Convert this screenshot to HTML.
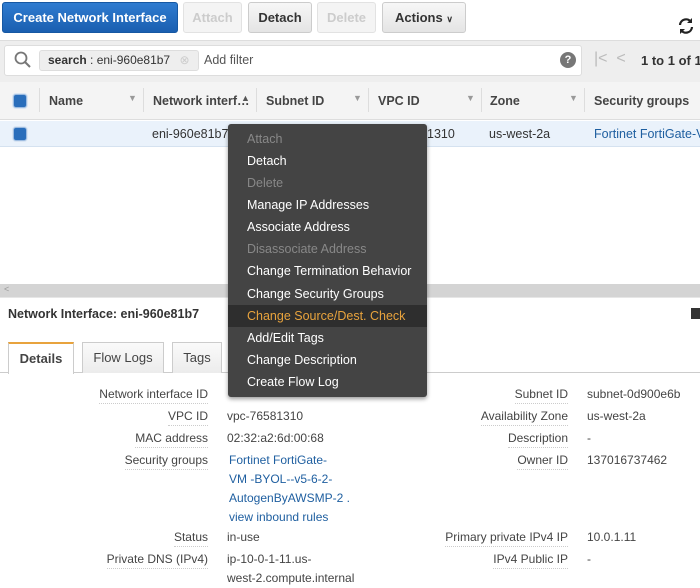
<!DOCTYPE html>
<html><head><meta charset="utf-8">
<style>
*{box-sizing:border-box;margin:0;padding:0}
body{width:700px;height:581px;overflow:hidden;background:#fff;font-family:"Liberation Sans",Arial,sans-serif;font-size:12px;color:#333;position:relative}
.a{position:absolute;white-space:nowrap}
.btn{position:absolute;top:2px;height:31px;border:1px solid #ccc;border-radius:3px;background:linear-gradient(#f7f7f7,#e4e4e4);font-weight:bold;font-size:13px;line-height:29px;text-align:center;color:#333}
.dis{color:#ccc;background:#f4f4f4;border-color:#e2e2e2}
.cb{position:absolute;width:14px;height:14px;border-radius:3px;background:#2a6ebb;border:1px solid #9cbbe0;box-shadow:0 0 0 1px #d9e5f3}
.hd{position:absolute;top:94px;font-weight:bold;font-size:12.5px;color:#444}
.car{position:absolute;top:93px;color:#999;font-size:9px}
.sep{position:absolute;top:88px;width:1px;height:24px;background:#ddd}
.menu{position:absolute;left:228px;top:124px;width:199px;height:273px;background:#444;border-radius:3px;box-shadow:0 2px 4px rgba(0,0,0,.4)}
.mi{position:absolute;left:19px;color:#fff;font-size:12.5px;white-space:nowrap}
.mg{color:#888}
.lb{position:absolute;text-align:right;font-size:12px;color:#444;white-space:nowrap;border-bottom:1px dotted #ccc;padding-bottom:2px}
.v{position:absolute;font-size:12px;color:#444;white-space:nowrap}
.lk{color:#1f5fa0}
.tab{position:absolute;top:342px;height:31px;border:1px solid #ccc;border-bottom:none;background:linear-gradient(#fafafa,#ececec);font-size:13px;line-height:29px;text-align:center;color:#444}
</style></head><body>
<div class="btn" style="left:2px;width:176px;background:linear-gradient(#2f7cd0,#1a5fb0);border-color:#1658a3;color:#fff">Create Network Interface</div>
<div class="btn dis" style="left:183px;width:59px">Attach</div>
<div class="btn" style="left:248px;width:64px">Detach</div>
<div class="btn dis" style="left:317px;width:59px">Delete</div>
<div class="btn" style="left:382px;width:84px">Actions <span style="font-size:9px">&#8744;</span></div>
<svg class="a" style="left:677px;top:17px" width="18" height="18" viewBox="0 0 18 18"><path d="M3 8a6 6 0 0 1 11-3M15 10a6 6 0 0 1-11 3" stroke="#222" stroke-width="2.2" fill="none"/><path d="M15 1v5h-5z M3 17v-5h5z" fill="#222"/></svg>

<div class="a" style="left:0;top:40px;width:700px;height:42px;background:#eee;border-top:1px solid #ddd"></div>
<div class="a" style="left:4px;top:45px;width:578px;height:31px;background:#fff;border:1px solid #ddd;border-radius:3px"></div>
<svg class="a" style="left:14px;top:51px" width="18" height="18" viewBox="0 0 18 18"><circle cx="7" cy="7" r="5.5" stroke="#777" stroke-width="1.8" fill="none"/><path d="M11 11l5 5" stroke="#777" stroke-width="2"/></svg>
<div class="a" style="left:39px;top:50px;width:160px;height:21px;background:#eee;border:1px solid #ddd;border-radius:3px;line-height:19px;padding-left:8px;font-size:12px;color:#333"><b>search</b> : eni-960e81b7 <span style="color:#ccc;margin-left:6px">&#8855;</span></div>
<div class="a" style="left:204px;top:53px;color:#555;font-size:12.5px">Add filter</div>
<div class="a" style="left:560px;top:52px;width:16px;height:16px;border-radius:8px;background:#777;color:#fff;font-weight:bold;font-size:11px;text-align:center;line-height:16px">?</div>
<div class="a" style="left:594px;top:50px;color:#bbb;font-size:16px">|&lt;&nbsp;&nbsp;&lt;</div>
<div class="a" style="left:641px;top:53px;font-weight:bold;font-size:13px;color:#333">1 to 1 of 1</div>

<div class="a" style="left:0;top:82px;width:700px;height:38px;background:#f4f4f4;border-bottom:1px solid #ddd"></div>
<div class="cb" style="left:13px;top:94px"></div>
<div class="sep" style="left:39px"></div>
<div class="hd" style="left:49px">Name</div><div class="car" style="left:128px">&#9660;</div>
<div class="sep" style="left:143px"></div>
<div class="hd" style="left:153px">Network interf&#8230;</div><div class="car" style="left:241px;color:#555">&#9650;</div>
<div class="sep" style="left:256px"></div>
<div class="hd" style="left:266px">Subnet ID</div><div class="car" style="left:353px">&#9660;</div>
<div class="sep" style="left:368px"></div>
<div class="hd" style="left:378px">VPC ID</div><div class="car" style="left:466px">&#9660;</div>
<div class="sep" style="left:481px"></div>
<div class="hd" style="left:490px">Zone</div><div class="car" style="left:569px">&#9660;</div>
<div class="sep" style="left:584px"></div>
<div class="hd" style="left:594px">Security groups</div>

<div class="a" style="left:0;top:121px;width:700px;height:26px;background:#eaf2fb;border-bottom:1px solid #d5e2f0"></div>
<div class="cb" style="left:13px;top:127px"></div>
<div class="a" style="left:152px;top:127px;font-size:12.5px">eni-960e81b7</div>
<div class="a" style="left:427px;top:127px;font-size:12.5px">1310</div>
<div class="a" style="left:489px;top:127px;font-size:12.5px">us-west-2a</div>
<div class="a" style="left:594px;top:127px;font-size:12.5px;color:#1f5fa0">Fortinet FortiGate-V</div>

<div class="a" style="left:0;top:284px;width:700px;height:13px;background:#d4d4d4"></div>
<div class="a" style="left:4px;top:284px;color:#999;font-size:9px">&lt;</div>
<div class="a" style="left:0;top:297px;width:700px;height:1px;background:#e6e6e6"></div>
<div class="a" style="left:8px;top:307px;font-weight:bold;font-size:12.5px;color:#333">Network Interface: eni-960e81b7</div>
<div class="a" style="left:691px;top:308px;width:9px;height:11px;background:#333"></div>

<div class="a" style="left:0;top:372px;width:700px;height:1px;background:#ccc"></div>
<div class="tab" style="left:8px;width:66px;background:#fff;border-top:2px solid #e8a33d;font-weight:bold;height:32px">Details</div>
<div class="tab" style="left:82px;width:82px">Flow Logs</div>
<div class="tab" style="left:172px;width:50px">Tags</div>

<div class="lb" style="right:492px;top:387px">Network interface ID</div>
<div class="lb" style="right:492px;top:409px">VPC ID</div>
<div class="v" style="left:227px;top:409px">vpc-76581310</div>
<div class="lb" style="right:492px;top:431px">MAC address</div>
<div class="v" style="left:227px;top:431px">02:32:a2:6d:00:68</div>
<div class="lb" style="right:492px;top:453px">Security groups</div>
<div class="v lk" style="left:229px;top:451px;line-height:19px">Fortinet FortiGate-<br>VM -BYOL--v5-6-2-<br>AutogenByAWSMP-2 .<br>view inbound rules</div>
<div class="lb" style="right:492px;top:530px">Status</div>
<div class="v" style="left:227px;top:530px">in-use</div>
<div class="lb" style="right:492px;top:552px">Private DNS (IPv4)</div>
<div class="v" style="left:227px;top:550px;line-height:19px">ip-10-0-1-11.us-<br>west-2.compute.internal</div>

<div class="lb" style="right:132px;top:387px">Subnet ID</div>
<div class="v" style="left:587px;top:387px">subnet-0d900e6b</div>
<div class="lb" style="right:132px;top:409px">Availability Zone</div>
<div class="v" style="left:587px;top:409px">us-west-2a</div>
<div class="lb" style="right:132px;top:431px">Description</div>
<div class="v" style="left:587px;top:431px">-</div>
<div class="lb" style="right:132px;top:453px">Owner ID</div>
<div class="v" style="left:587px;top:453px">137016737462</div>
<div class="lb" style="right:132px;top:530px">Primary private IPv4 IP</div>
<div class="v" style="left:587px;top:530px">10.0.1.11</div>
<div class="lb" style="right:132px;top:552px">IPv4 Public IP</div>
<div class="v" style="left:587px;top:552px">-</div>

<div class="menu">
<div class="a" style="left:0;top:181px;width:199px;height:22px;background:#2e2e2e"></div>
<div class="mi mg" style="top:8px">Attach</div>
<div class="mi" style="top:30px">Detach</div>
<div class="mi mg" style="top:52px">Delete</div>
<div class="mi" style="top:74px">Manage IP Addresses</div>
<div class="mi" style="top:96px">Associate Address</div>
<div class="mi mg" style="top:118px">Disassociate Address</div>
<div class="mi" style="top:140px">Change Termination Behavior</div>
<div class="mi" style="top:163px">Change Security Groups</div>
<div class="mi" style="top:185px;color:#e8a33d">Change Source/Dest. Check</div>
<div class="mi" style="top:207px">Add/Edit Tags</div>
<div class="mi" style="top:229px">Change Description</div>
<div class="mi" style="top:251px">Create Flow Log</div>
</div>
</body></html>
